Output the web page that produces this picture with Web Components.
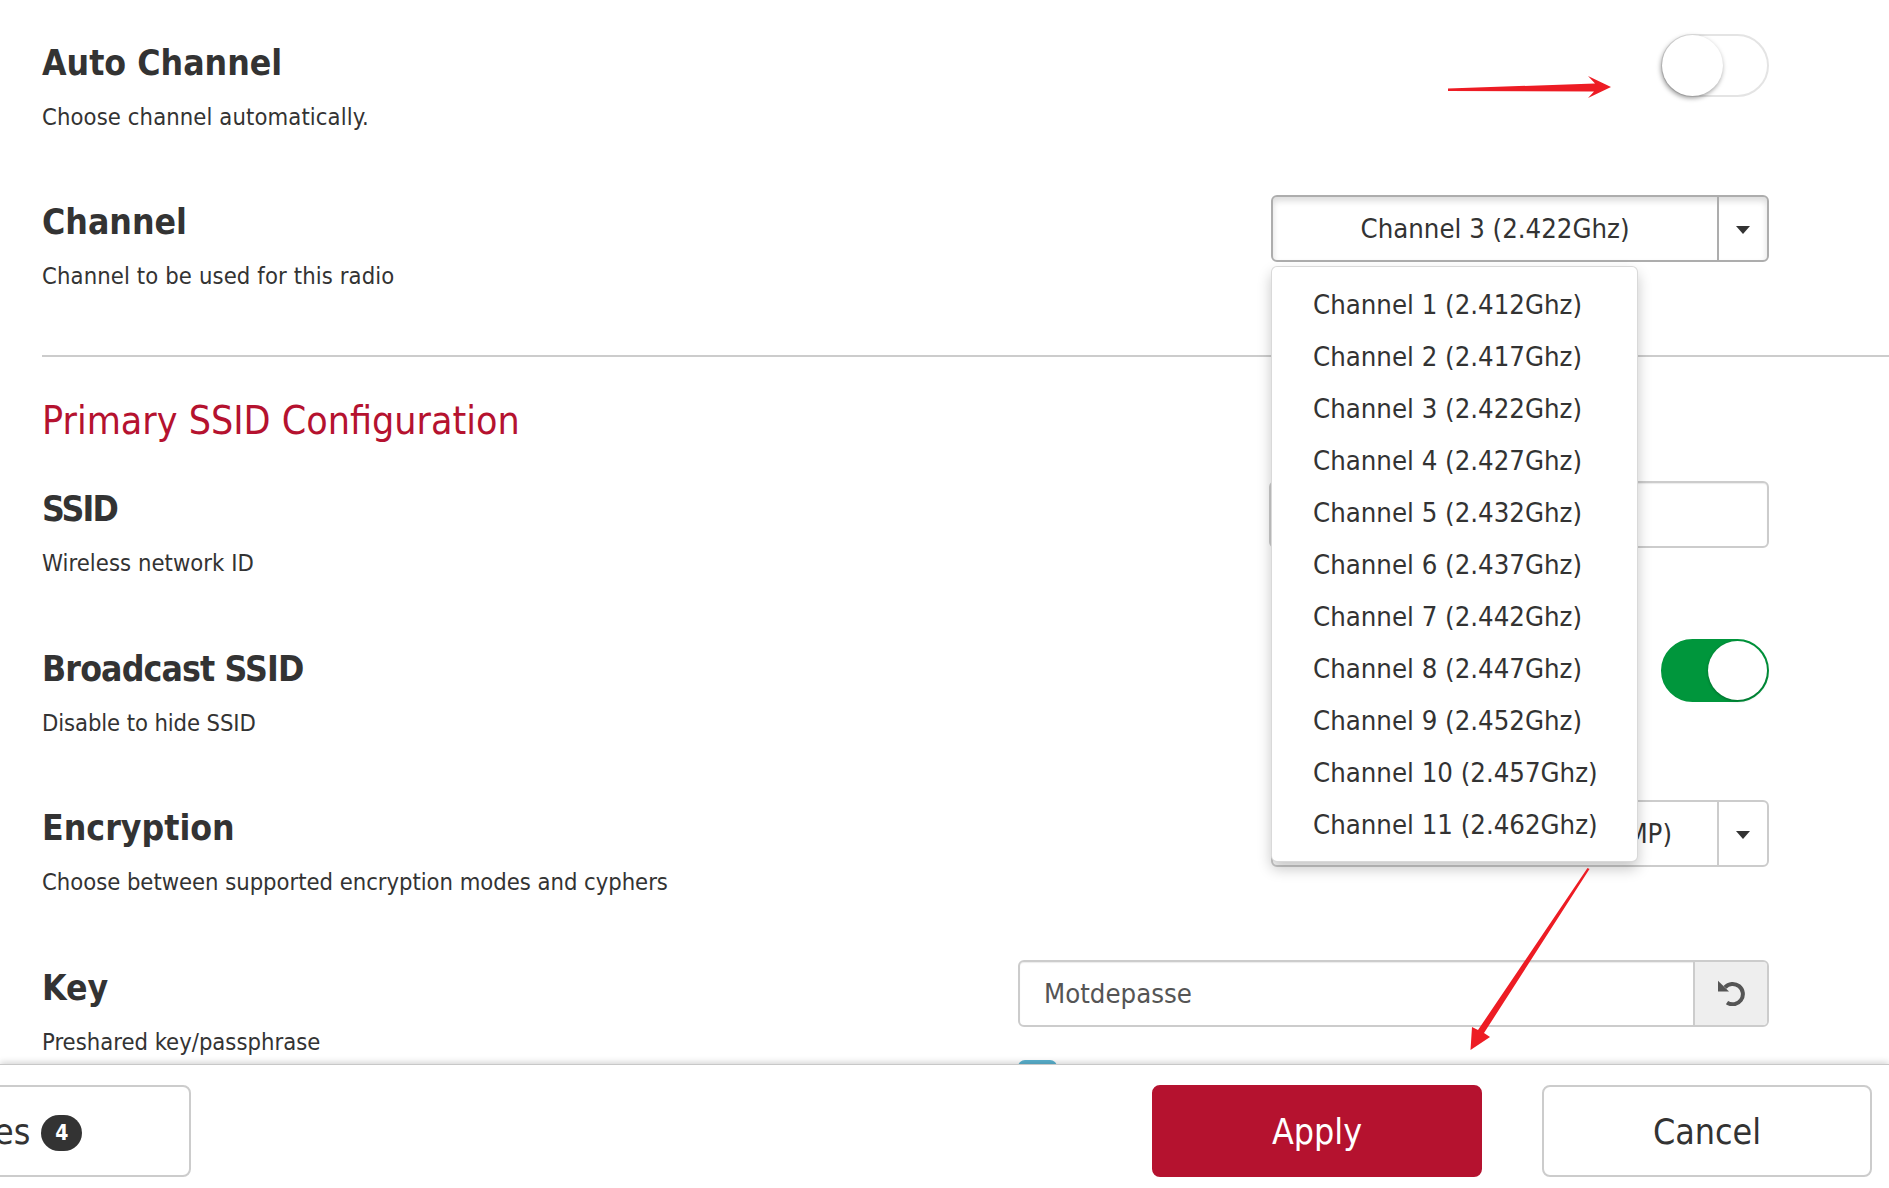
<!doctype html>
<html><head><meta charset="utf-8"><style>
html,body{margin:0;height:100%;overflow:hidden;background:#fff}
body{font-family:"DejaVu Sans Condensed","DejaVu Sans",sans-serif;color:#333}
</style></head><body>
<x-app>
  <x-row slot="main" name="Auto Channel" desc="Choose channel automatically." style="--top:34px;--dls:.1px"><x-toggle></x-toggle></x-row>
  <x-row slot="main" name="Channel" desc="Channel to be used for this radio" style="--top:36px;--dls:.12px"><x-select open>Channel 3 (2.422Ghz)</x-select></x-row>
  <x-section slot="main">Primary SSID Configuration</x-section>
  <x-row slot="main" name="SSID" desc="Wireless network ID" style="--top:34.4px;--ls:-1.8px;--dls:.05px"><x-field></x-field></x-row>
  <x-row slot="main" name="Broadcast SSID" desc="Disable to hide SSID" style="--top:33px;--ls:-.86px;--dls:-.1px"><x-toggle on></x-toggle></x-row>
  <x-row slot="main" name="Encryption" desc="Choose between supported encryption modes and cyphers" style="--top:34.6px;--dls:-.03px"><x-select>MP)</x-select></x-row>
  <x-row slot="main" name="Key" desc="Preshared key/passphrase" style="--top:35px"><x-field wide value="Motdepasse" addon></x-field></x-row>
  <x-menu slot="overlay">
    <span>Channel 1 (2.412Ghz)</span><span>Channel 2 (2.417Ghz)</span><span>Channel 3 (2.422Ghz)</span><span>Channel 4 (2.427Ghz)</span><span>Channel 5 (2.432Ghz)</span><span>Channel 6 (2.437Ghz)</span><span>Channel 7 (2.442Ghz)</span><span>Channel 8 (2.447Ghz)</span><span>Channel 9 (2.452Ghz)</span><span>Channel 10 (2.457Ghz)</span><span>Channel 11 (2.462Ghz)</span>
  </x-menu>
  <x-arrows slot="overlay"></x-arrows>
  <x-btn slot="footer" class="changes">es<x-badge>4</x-badge></x-btn>
  <x-btn slot="footer" primary>Apply</x-btn>
  <x-btn slot="footer">Cancel</x-btn>
</x-app>
<script>
function def(name,html,setup){
  customElements.define(name,class extends HTMLElement{
    constructor(){super();this.attachShadow({mode:'open'}).innerHTML=html}
    connectedCallback(){if(setup)setup.call(this,this.shadowRoot)}
  });
}
def('x-app',`<style>
:host{display:flex;flex-direction:column;height:1188px;width:1889px;position:relative;overflow:hidden}
main{height:1064px;overflow:hidden;padding-left:42px;flex:none}
footer{flex:none;height:124px;border-top:1px solid #c8c8c8;box-shadow:0 -2px 6px rgba(0,0,0,.16);background:#fff;position:relative;
 display:flex;align-items:flex-start;padding:20px 17px 0 0;box-sizing:border-box;gap:60px}
</style><main><slot name="main"></slot></main><footer><slot name="footer"></slot></footer><slot name="overlay"></slot>`);
def('x-row',`<style>
:host{display:flex;justify-content:space-between;align-items:flex-start;height:159.4px;padding-right:120px}
.name{font-size:35.3px;font-weight:700;line-height:40px;margin-top:43px;letter-spacing:var(--ls,0)}
.desc{font-size:23.6px;line-height:34px;margin-top:17px;letter-spacing:var(--dls,0)}
::slotted(*){margin-top:var(--top)}
</style><div><div class="name"></div><div class="desc"></div></div><slot></slot>`,function(s){
  s.querySelector('.name').textContent=this.getAttribute('name');
  s.querySelector('.desc').textContent=this.getAttribute('desc');
});
def('x-section',`<style>
:host{display:block;border-top:2px solid #ccc;margin-top:36px;height:91.6px;box-sizing:border-box}
div{color:#b5122f;font-size:39px;line-height:46px;margin-top:41px}
</style><div><slot></slot></div>`);
def('x-toggle',`<style>
:host{display:block;width:108px;height:63px;box-sizing:border-box;border:2px solid #e4e4e4;border-radius:32px;position:relative;background:#fff}
:host([on]){background:#00963c;border-color:#00963c}
i{position:absolute;left:-1px;top:-1px;width:61px;height:61px;border-radius:50%;background:#fff;box-shadow:-1px 2px 5px rgba(0,0,0,.42)}
:host([on]) i{left:auto;right:0;top:0;width:59px;height:59px;box-shadow:0 1px 3px rgba(0,0,0,.3)}
</style><i></i>`);
def('x-select',`<style>
:host{display:flex;width:498px;height:67px;box-sizing:border-box;border:2px solid #ccc;border-radius:6px;font-size:27.3px;overflow:hidden;background:#fff}
:host([open]){border-color:#adadad;box-shadow:inset 0 4px 6px rgba(0,0,0,.14)}
.t{flex:1;display:flex;align-items:center;justify-content:center}
:host(:not([open])) .t{justify-content:flex-end;padding-right:45px}
.c{width:50px;border-left:2px solid #ccc;display:flex;align-items:center;justify-content:center;box-sizing:border-box}
:host([open]) .c{border-left-color:#adadad}
.c i{width:0;height:0;border:7.5px solid transparent;border-top:8px solid #333;border-bottom:0;margin-top:3px}
</style><div class="t"><slot></slot></div><div class="c"><i></i></div>`);
def('x-field',`<style>
:host{display:block;width:500px}
:host([wide]){width:751px}
.b{display:flex;height:67px;box-sizing:border-box;border:2px solid #ccc;border-radius:6px;overflow:hidden;box-shadow:inset 0 1px 1px rgba(0,0,0,.08)}
.v{flex:1;display:flex;align-items:center;padding-left:24px;font-size:27.3px;color:#555}
.a{width:74px;background:#eee;border-left:2px solid #ccc;box-sizing:border-box;display:flex;align-items:center;justify-content:center}
.p{display:none;width:39px;height:20px;background:#5bb3d0;border-radius:7px;margin-top:33px}
:host([wide]) .p{display:block}
svg{display:block}
</style><div class="b"><div class="v"></div><div class="a" hidden><svg width="28" height="26" viewBox="0 0 28 26"><path d="M8 7.4A10.2 10.2 0 1 1 10 22.6" fill="none" stroke="#555" stroke-width="4"/><path d="M1 .8V11.4H12Z" fill="#555"/></svg></div></div><div class="p"></div>`,function(s){
  s.querySelector('.v').textContent=this.getAttribute('value')||'';
  const a=s.querySelector('.a'); if(this.hasAttribute('addon'))a.hidden=false; else a.style.display='none';
});
def('x-menu',`<style>
:host{position:absolute;left:1271px;top:266px;width:367px;height:596px;box-sizing:border-box;border:1px solid rgba(0,0,0,.15);border-radius:6px;background:#fff;box-shadow:0 7px 14px rgba(0,0,0,.22);padding:11px 0;display:flex;flex-direction:column;font-size:27.3px}
::slotted(span){display:flex;align-items:center;height:52px;padding-left:41px;white-space:nowrap}
</style><slot></slot>`);
def('x-arrows',`<style>:host{position:absolute;left:0;top:0;width:1889px;height:1188px;pointer-events:none}svg{display:block}</style>
<svg width="1889" height="1188"><polygon fill="#ed1c24" points="1448,88.5 1595,83.5 1588,76 1611,87 1588,98 1594,91.5 1448,91"/><polygon fill="#ed1c24" points="1587.5,868 1589.5,869 1484,1033 1490,1037 1470.5,1050 1472,1027 1478,1030"/></svg>`);
def('x-btn',`<style>
:host{display:flex;align-items:center;justify-content:center;height:92px;width:330px;box-sizing:border-box;border:2px solid #ccc;border-radius:8px;font-size:35.5px;background:#fff;flex:none}
:host([primary]){background:#b5122f;border-color:#b5122f;color:#fff;margin-left:auto}
:host(.changes){width:205px;margin-left:-14px;justify-content:flex-start;padding-left:6px}
</style><slot></slot>`);
def('x-badge',`<style>
:host{display:inline-flex;align-items:center;justify-content:center;width:41px;height:36px;border-radius:18px;background:#333;color:#fff;font-size:21px;font-weight:700;margin-left:11px;margin-top:3px}
</style><slot></slot>`);
</script></body></html>
